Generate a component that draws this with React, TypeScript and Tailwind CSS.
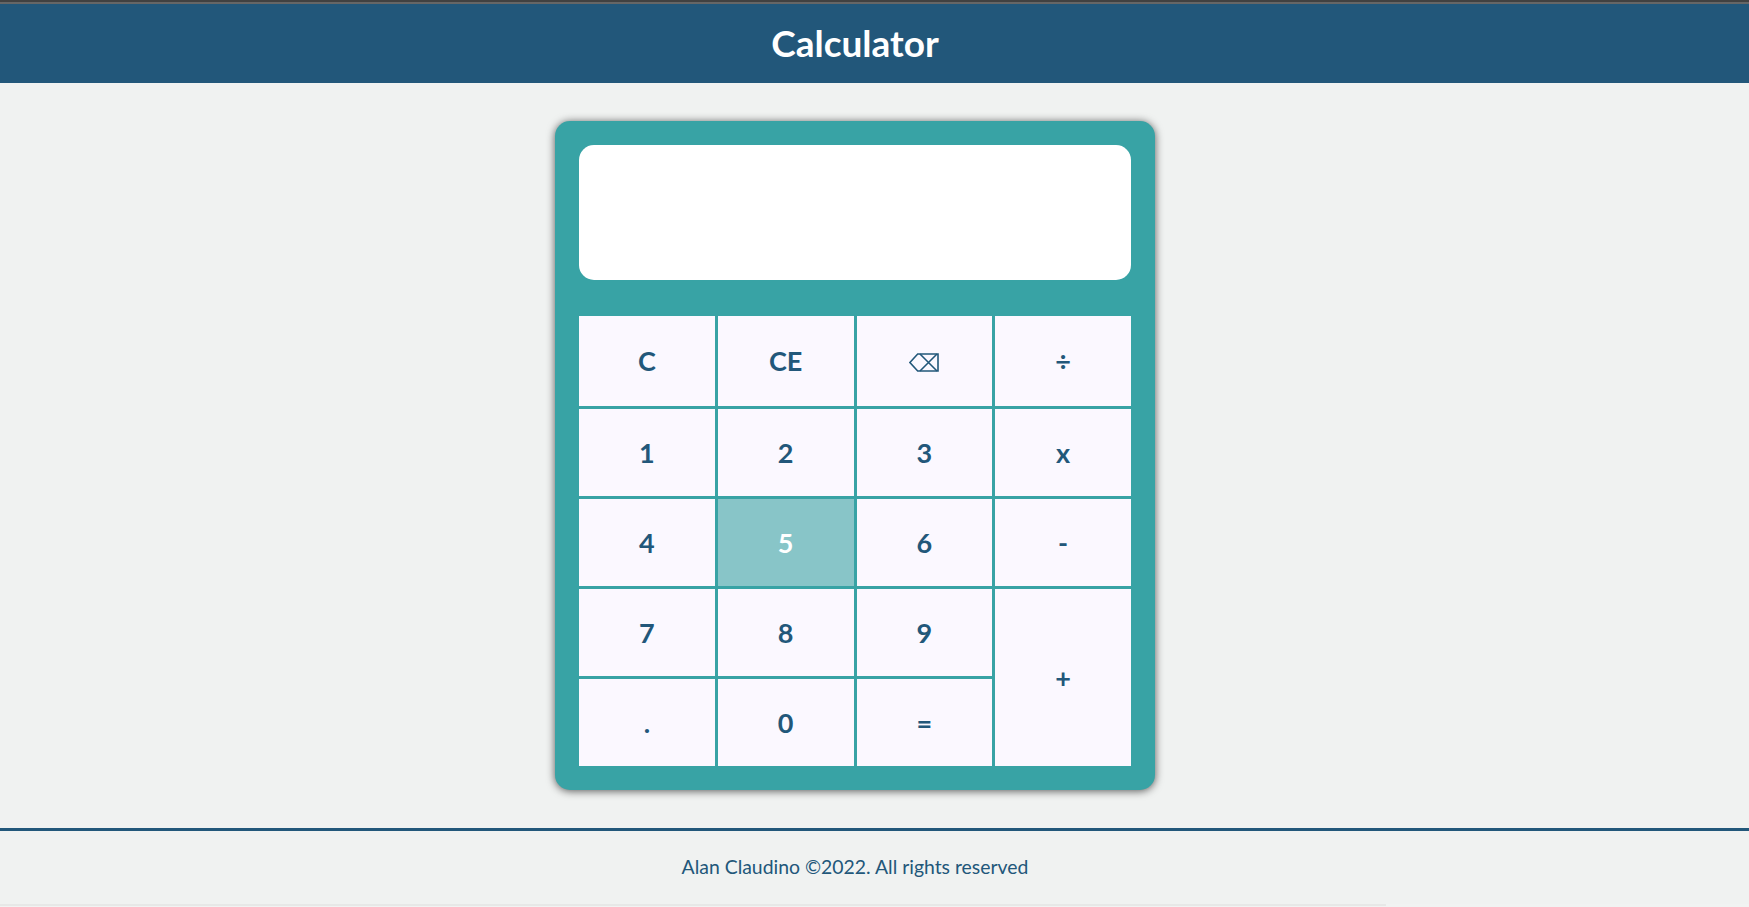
const KEYS = [
  { label: 'C' },
  { label: 'CE' },
  { label: 'backspace' },
  { label: '÷' },
  { label: '1' },
  { label: '2' },
  { label: '3' },
  { label: 'x' },
  { label: '4' },
  { label: '5', active: true },
  { label: '6' },
  { label: '-' },
  { label: '7' },
  { label: '8' },
  { label: '9' },
  { label: '+', tall: true },
  { label: '.' },
  { label: '0' },
  { label: '=' },
]

function BackspaceIcon() {
  return (
    <svg width="30" height="19" viewBox="0 0 30 19" fill="none" stroke="#22577a" strokeWidth="1.6" aria-hidden="true">
      <path d="M0.9 9.5 L8.7 1 H29 V18 H8.7 Z" />
      <path d="M11 1 L28 18 M28 1 L11 18" />
    </svg>
  )
}

function Key({ label, active, tall }: { label: string; active?: boolean; tall?: boolean }) {
  const isBackspace = label === 'backspace'
  return (
    <button
      aria-label={label}
      className={`flex items-center justify-center text-[27px] font-bold ${isBackspace ? 'pt-[2px]' : 'pt-[1px]'} ${
        tall ? 'row-span-2' : ''
      } ${active ? 'bg-[#88c5c8] text-white' : 'bg-[#fbf8ff] text-[#22577a]'}`}
    >
      {isBackspace ? <BackspaceIcon /> : label}
    </button>
  )
}

export default function App() {
  return (
    <div className="relative flex h-[907px] flex-col overflow-hidden bg-[#f0f2f1] font-['Lato',sans-serif]">
      <div className="h-[2px] bg-[#414141]" />
      <div className="h-[2px] bg-[#666666]" />
      <header className="h-[79px] bg-[#22577a]">
        <div className="flex h-full w-[1710px] items-center justify-center pb-[2px]">
          <h1 className="text-[37px] font-bold text-white">Calculator</h1>
        </div>
      </header>

      <main className="flex w-[1710px] justify-center py-[38px]">
        <div className="flex h-[669px] w-[600px] flex-col rounded-[15px] bg-[#38a3a5] p-[24px] shadow-[0_1px_8px_rgba(0,0,0,0.65)]">
          <div className="h-[135px] rounded-[15px] bg-white" />
          <div className="mt-[36px] grid grid-cols-4 grid-rows-[90px_repeat(4,87px)] gap-[3px]">
            {KEYS.map((key) => (
              <Key key={key.label} {...key} />
            ))}
          </div>
        </div>
      </main>

      <footer className="h-[76px] border-t-[3px] border-[#22577a]">
        <div className="flex h-full w-[1710px] items-center justify-center pb-[2px]">
          <p className="text-[19.4px] text-[#22577a]">Alan Claudino ©2022. All rights reserved</p>
        </div>
      </footer>

      <div className="absolute bottom-0 left-0 h-[3px] w-full bg-[#f1f3f2]">
        <div className="h-[2px] w-[1386px] bg-[#e7e8e7]" />
      </div>
    </div>
  )
}
